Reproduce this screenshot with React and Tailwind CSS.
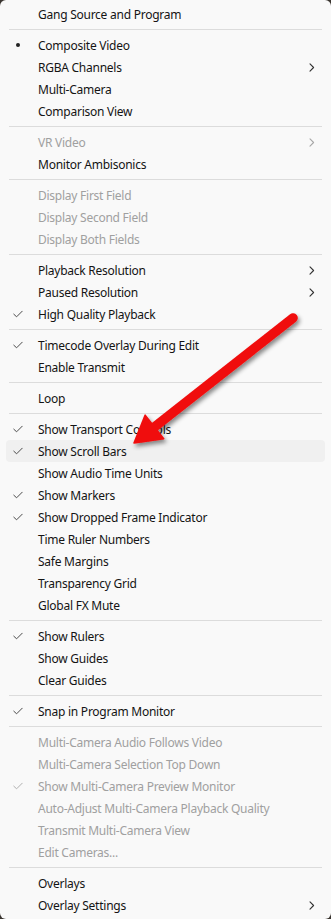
import React from "react";

const S = "sep";
const items = [
  { t: "Gang Source and Program" },
  S,
  { t: "Composite Video", mark: "dot" },
  { t: "RGBA Channels", sub: true },
  { t: "Multi-Camera" },
  { t: "Comparison View" },
  S,
  { t: "VR Video", dis: true, sub: true },
  { t: "Monitor Ambisonics" },
  S,
  { t: "Display First Field", dis: true },
  { t: "Display Second Field", dis: true },
  { t: "Display Both Fields", dis: true },
  S,
  { t: "Playback Resolution", sub: true },
  { t: "Paused Resolution", sub: true },
  { t: "High Quality Playback", mark: "check" },
  S,
  { t: "Timecode Overlay During Edit", mark: "check" },
  { t: "Enable Transmit" },
  S,
  { t: "Loop" },
  S,
  { t: "Show Transport Controls", mark: "check" },
  { t: "Show Scroll Bars", mark: "check", hl: true },
  { t: "Show Audio Time Units" },
  { t: "Show Markers", mark: "check" },
  { t: "Show Dropped Frame Indicator", mark: "check" },
  { t: "Time Ruler Numbers" },
  { t: "Safe Margins" },
  { t: "Transparency Grid" },
  { t: "Global FX Mute" },
  S,
  { t: "Show Rulers", mark: "check" },
  { t: "Show Guides" },
  { t: "Clear Guides" },
  S,
  { t: "Snap in Program Monitor", mark: "check" },
  S,
  { t: "Multi-Camera Audio Follows Video", dis: true },
  { t: "Multi-Camera Selection Top Down", dis: true },
  { t: "Show Multi-Camera Preview Monitor", dis: true, mark: "check" },
  { t: "Auto-Adjust Multi-Camera Playback Quality", dis: true },
  { t: "Transmit Multi-Camera View", dis: true },
  { t: "Edit Cameras...", dis: true },
  S,
  { t: "Overlays" },
  { t: "Overlay Settings", sub: true },
];

function Check({ dis }) {
  return (
    <svg width="10" height="8" viewBox="0 0 10 8" className="block">
      <path
        d="M0.8 4.2 L3.6 6.8 L9.2 1.2"
        fill="none"
        stroke={dis ? "#b0b0b0" : "#4a4a4a"}
        strokeWidth="1"
        strokeLinecap="round"
        strokeLinejoin="round"
      />
    </svg>
  );
}

function Chevron({ dis }) {
  return (
    <svg width="6" height="9" viewBox="0 0 6 9" className="block">
      <path
        d="M1 0.8 L4.6 4.5 L1 8.2"
        fill="none"
        stroke={dis ? "#a8a8a8" : "#333333"}
        strokeWidth="1.1"
        strokeLinecap="round"
        strokeLinejoin="round"
      />
    </svg>
  );
}

function Row({ it }) {
  return (
    <div
      className={`relative mx-[6px] flex h-[22px] items-center rounded-[4px] ${
        it.hl ? "bg-[#f0f0f0]" : ""
      }`}
    >
      <div className="flex w-[32px] shrink-0 items-center pl-[7px]">
        {it.mark === "check" && <Check dis={it.dis} />}
        {it.mark === "dot" && (
          <div className="ml-[3px] h-[4px] w-[4px] rounded-full bg-[#222]" />
        )}
      </div>
      <div
        className={`mt-[2px] flex-1 whitespace-nowrap text-[12px] leading-none tracking-[-0.25px] ${
          it.dis ? "text-[#a0a0a0]" : "text-[#141414]"
        }`}
      >
        {it.t}
      </div>
      {it.sub && (
        <div className="pr-[10px]">
          <Chevron dis={it.dis} />
        </div>
      )}
    </div>
  );
}

function Arrow() {
  const sx = 293, sy = 318, tx = 134, ty = 443;
  const dx = tx - sx, dy = ty - sy;
  const len = Math.hypot(dx, dy);
  const ux = dx / len, uy = dy / len;
  const px = -uy, py = ux;
  const hl = 26, hw = 15;
  const bx = tx - ux * hl, by = ty - uy * hl;
  const w1x = bx + px * hw, w1y = by + py * hw;
  const w2x = bx - px * hw, w2y = by - py * hw;
  const lx = tx - ux * (hl - 4), ly = ty - uy * (hl - 4);
  return (
    <svg
      className="pointer-events-none absolute left-0 top-0"
      width="331"
      height="919"
      viewBox="0 0 331 919"
    >
      <defs>
        <filter id="sh" x="-20%" y="-20%" width="140%" height="140%">
          <feDropShadow dx="2" dy="3" stdDeviation="2.2" floodColor="#000" floodOpacity="0.45" />
        </filter>
      </defs>
      <g filter="url(#sh)">
        <line
          x1={sx}
          y1={sy}
          x2={lx}
          y2={ly}
          stroke="#f00a0a"
          strokeWidth="9.5"
          strokeLinecap="round"
        />
        <polygon
          points={`${tx},${ty} ${w1x},${w1y} ${w2x},${w2y}`}
          fill="#f00a0a"
          stroke="#f00a0a"
          strokeWidth="1.5"
          strokeLinejoin="round"
        />
      </g>
    </svg>
  );
}

export default function App() {
  return (
    <div className="h-[919px] w-[331px] bg-[#3a3530]">
      <div
        className="relative h-[919px] w-[331px] overflow-hidden rounded-[6px] bg-[#f9f9f9] py-[3px]"
        style={{ fontFamily: '"Noto Sans", "Open Sans", sans-serif' }}
      >
        {items.map((it, i) =>
          it === S ? (
            <div key={i} className="flex h-[9px] items-center px-[9px]">
              <div className="h-px w-full bg-[#dcdcdc]" />
            </div>
          ) : (
            <Row key={i} it={it} />
          )
        )}
        <Arrow />
      </div>
    </div>
  );
}
